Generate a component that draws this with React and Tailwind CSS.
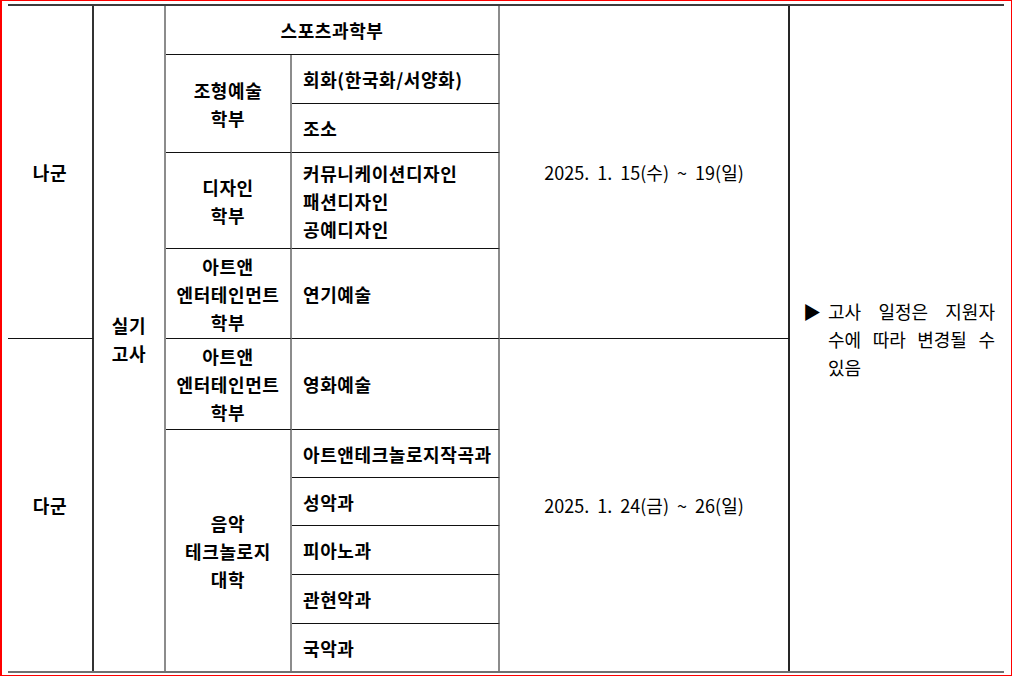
export default function App() {
  const H = "border-b border-b-[#111]";
  const G = "border-r-2 border-r-[#8c8c8c]";
  const cellC = "flex items-center justify-center text-center font-bold tracking-[0.6px]";
  const cellL = "flex items-center pl-[11px] font-bold tracking-[0.6px]";
  return (
    <div
      className="w-[1012px] h-[676px] bg-white border-l-2 border-t border-r border-b border-[#ff0000] box-border pt-[3px] pl-[6px] overflow-hidden"
      style={{ fontFamily: '"Noto Sans CJK KR", "Noto Sans", sans-serif' }}
    >
      <div className="grid w-[996px] grid-cols-[86px_72px_126px_208px_290px_214px] grid-rows-[49px_49px_49px_96px_90px_91px_48px_48px_49px_49px_47px] border-t-2 border-t-[#3c3c3c] border-b-2 border-b-[#707070] text-[18px] leading-[28px] text-black">
        <div className={`col-start-1 row-start-1 row-span-5 border-r-2 border-r-[#333] ${H} ${cellC}`}>나군</div>
        <div className={`col-start-2 row-start-1 row-span-11 ${G} ${cellC}`}>
          <div>실기<br />고사</div>
        </div>
        <div className={`col-start-3 col-span-2 row-start-1 ${G} ${H} ${cellC}`}>스포츠과학부</div>
        <div className={`col-start-5 row-start-1 row-span-5 border-r-2 border-r-[#262626] ${H} flex items-center justify-center whitespace-pre`}>2025.  1.  15(수)  ~  19(일)</div>
        <div className="col-start-6 row-start-1 row-span-11 flex items-center">
          <div className="w-full pl-[13px] pr-[9px]">
            <div className="flex">
              <span className="w-[25px]">▶</span>
              <span className="flex-1 flex justify-between"><span>고사</span><span>일정은</span><span>지원자</span></span>
            </div>
            <div className="pl-[25px] flex justify-between"><span>수에</span><span>따라</span><span>변경될</span><span>수</span></div>
            <div className="pl-[25px]">있음</div>
          </div>
        </div>

        <div className={`col-start-3 row-start-2 row-span-2 ${G} ${H} ${cellC}`}><div>조형예술<br />학부</div></div>
        <div className={`col-start-4 row-start-2 ${G} ${H} ${cellL}`}>회화(한국화/서양화)</div>
        <div className={`col-start-4 row-start-3 ${G} ${H} ${cellL}`}>조소</div>
        <div className={`col-start-3 row-start-4 ${G} ${H} ${cellC}`}><div>디자인<br />학부</div></div>
        <div className={`col-start-4 row-start-4 ${G} ${H} ${cellL}`}><div>커뮤니케이션디자인<br />패션디자인<br />공예디자인</div></div>
        <div className={`col-start-3 row-start-5 ${G} ${H} ${cellC}`}><div>아트앤<br />엔터테인먼트<br />학부</div></div>
        <div className={`col-start-4 row-start-5 ${G} ${H} ${cellL}`}>연기예술</div>

        <div className={`col-start-1 row-start-6 row-span-6 border-r-2 border-r-[#333] ${cellC}`}>다군</div>
        <div className={`col-start-3 row-start-6 ${G} ${H} ${cellC}`}><div>아트앤<br />엔터테인먼트<br />학부</div></div>
        <div className={`col-start-4 row-start-6 ${G} ${H} ${cellL}`}>영화예술</div>
        <div className="col-start-5 row-start-6 row-span-6 border-r-2 border-r-[#262626] flex items-center justify-center whitespace-pre">2025.  1.  24(금)  ~  26(일)</div>

        <div className={`col-start-3 row-start-7 row-span-5 ${G} ${cellC}`}><div>음악<br />테크놀로지<br />대학</div></div>
        <div className={`col-start-4 row-start-7 ${G} ${H} ${cellL}`}>아트앤테크놀로지작곡과</div>
        <div className={`col-start-4 row-start-8 ${G} ${H} ${cellL}`}>성악과</div>
        <div className={`col-start-4 row-start-9 ${G} ${H} ${cellL}`}>피아노과</div>
        <div className={`col-start-4 row-start-10 ${G} ${H} ${cellL}`}>관현악과</div>
        <div className={`col-start-4 row-start-11 ${G} ${cellL}`}>국악과</div>
      </div>
    </div>
  );
}
